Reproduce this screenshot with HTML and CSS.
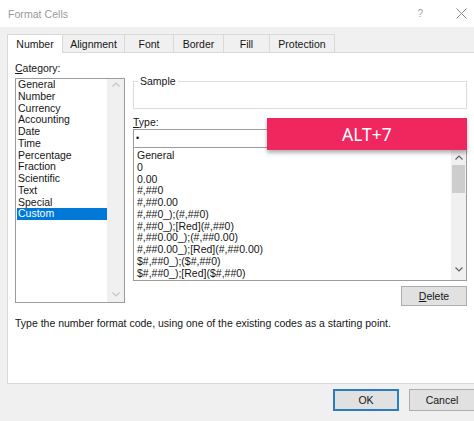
FILE: index.html
```html
<!DOCTYPE html>
<html lang="en">
<head>
<meta charset="utf-8">
<title>Format Cells</title>
<link rel="stylesheet" href="styles.css">
</head>
<body>
<div class="dialog">
  <div class="titlebar">
    <span class="title">Format Cells</span>
    <span class="help">?</span>
    <svg class="close" width="11" height="11" viewBox="0 0 11 11"><path d="M0.5 0.5 L10.5 10.5 M10.5 0.5 L0.5 10.5" stroke="#8a8a8a" stroke-width="1" fill="none"/></svg>
  </div>

  <div class="tabs">
    <div class="tab tab-number active">Number</div>
    <div class="tab tab-alignment">Alignment</div>
    <div class="tab tab-font">Font</div>
    <div class="tab tab-border">Border</div>
    <div class="tab tab-fill">Fill</div>
    <div class="tab tab-protection">Protection</div>
  </div>

  <div class="panel">
    <div class="columns">
      <div class="left">
        <div class="label"><span class="acc">C</span>ategory:</div>
        <div class="listbox category">
          <ul class="items">
            <li>General</li>
            <li>Number</li>
            <li>Currency</li>
            <li>Accounting</li>
            <li>Date</li>
            <li>Time</li>
            <li>Percentage</li>
            <li>Fraction</li>
            <li>Scientific</li>
            <li>Text</li>
            <li>Special</li>
            <li class="selected">Custom</li>
          </ul>
          <div class="scrollbar disabled">
            <svg width="8" height="5" viewBox="0 0 8 5"><path d="M0.5 4.5 L4 1 L7.5 4.5" stroke="#c4c4c4" stroke-width="1.2" fill="none"/></svg>
            <svg width="8" height="5" viewBox="0 0 8 5"><path d="M0.5 0.5 L4 4 L7.5 0.5" stroke="#c4c4c4" stroke-width="1.2" fill="none"/></svg>
          </div>
        </div>
      </div>

      <div class="right">
        <fieldset class="sample">
          <legend>Sample</legend>
          <div class="sample-body"></div>
        </fieldset>
        <div class="label type-label"><span class="acc">T</span>ype:</div>
        <div class="type-input">•</div>
        <div class="listbox formats">
          <ul class="items">
            <li>General</li>
            <li>0</li>
            <li>0.00</li>
            <li>#,##0</li>
            <li>#,##0.00</li>
            <li>#,##0_);(#,##0)</li>
            <li>#,##0_);[Red](#,##0)</li>
            <li>#,##0.00_);(#,##0.00)</li>
            <li>#,##0.00_);[Red](#,##0.00)</li>
            <li>$#,##0_);($#,##0)</li>
            <li>$#,##0_);[Red]($#,##0)</li>
          </ul>
          <div class="scrollbar active">
            <svg width="8" height="5" viewBox="0 0 8 5"><path d="M0.5 4.5 L4 1 L7.5 4.5" stroke="#606060" stroke-width="1.2" fill="none"/></svg>
            <div class="thumb"></div>
            <div class="track-fill"></div>
            <svg width="8" height="5" viewBox="0 0 8 5"><path d="M0.5 0.5 L4 4 L7.5 0.5" stroke="#606060" stroke-width="1.2" fill="none"/></svg>
          </div>
        </div>
        <div class="delete-row">
          <button class="btn delete"><span class="acc">D</span>elete</button>
        </div>
      </div>
    </div>
    <p class="hint">Type the number format code, using one of the existing codes as a starting point.</p>
  </div>

  <div class="footer">
    <button class="btn ok">OK</button>
    <button class="btn cancel">Cancel</button>
  </div>
</div>

<div class="shortcut">ALT+7</div>
</body>
</html>
```

FILE: styles.css
```css
* {
  box-sizing: border-box;
}

html, body {
  margin: 0;
  padding: 0;
}

body {
  width: 474px;
  height: 421px;
  overflow: hidden;
  background: #f0f0f0;
  font-family: "Liberation Sans", Arial, sans-serif;
  font-size: 10.5px;
  color: #151515;
  position: relative;
}

.dialog {
  width: 474px;
  height: 421px;
  display: flex;
  flex-direction: column;
}

/* Title bar */
.titlebar {
  height: 27px;
  background: #ffffff;
  display: flex;
  align-items: center;
  padding: 0 7px 0 8px;
  flex-shrink: 0;
}

.title {
  color: #9a9a9a;
  font-size: 10.6px;
}

.help {
  margin-left: auto;
  color: #a0a0a0;
  font-size: 10px;
  margin-right: 33px;
}

.close {
  display: block;
}

/* Tabs */
.tabs {
  display: flex;
  margin-top: 7px;
  padding-left: 7px;
  height: 18px;
  flex-shrink: 0;
}

.tab {
  height: 18px;
  line-height: 18px;
  text-align: center;
  border: 1px solid #d9d9d9;
  border-bottom: none;
  border-right: none;
  background: #f0f0f0;
  color: #151515;
}

.tab-protection {
  border-right: 1px solid #d9d9d9;
}

.tab.active {
  background: #ffffff;
  height: 19px;
  margin-bottom: -1px;
  position: relative;
  z-index: 1;
}

.tab-number { width: 55px; }
.tab-alignment { width: 62px; }
.tab-font { width: 49px; }
.tab-border { width: 50px; }
.tab-fill { width: 46px; }
.tab-protection { width: 66px; }

/* Panel */
.panel {
  margin-left: 7px;
  height: 332px;
  background: #ffffff;
  border: 1px solid #d9d9d9;
  border-right: none;
  flex-shrink: 0;
}

.columns {
  display: flex;
  gap: 8px;
  padding: 8px 7px 0 7px;
}

.left {
  width: 110px;
  flex-shrink: 0;
}

.right {
  flex: 1;
  display: flex;
  flex-direction: column;
}

.label {
  line-height: 14px;
  height: 14px;
}

.acc {
  text-decoration: underline;
  text-underline-offset: 1px;
  text-decoration-thickness: 1px;
}

/* List boxes */
.listbox {
  display: flex;
  border: 1px solid #9c9c9c;
  background: #ffffff;
}

.listbox.category {
  margin-top: 3px;
  height: 225px;
}

.items {
  list-style: none;
  margin: 0;
  padding: 0 0 0 1px;
  flex: 1;
  line-height: 11.75px;
  white-space: nowrap;
}

.items li {
  height: 11.75px;
  padding-left: 1px;
}

.items li.selected {
  background: #0078d7;
  color: #ffffff;
  height: 12px;
}

.scrollbar {
  background: #f0f0f0;
  display: flex;
  flex-direction: column;
  align-items: center;
}

.scrollbar.disabled {
  width: 17px;
  justify-content: space-between;
  padding: 3px 0 5px;
}

.scrollbar svg {
  display: block;
  flex-shrink: 0;
}

.formats {
  margin-top: -1px;
  height: 134px;
}

.formats .items {
  padding: 2px 0 0 3px;
}

.formats .items li {
  padding-left: 0;
}

.scrollbar.active {
  width: 15px;
  padding: 7px 0 8px;
}

.thumb {
  margin-top: 5px;
  width: 13px;
  height: 28px;
  background: #cdcdcd;
  flex-shrink: 0;
}

.track-fill {
  flex: 1;
}

/* Sample fieldset */
.sample {
  margin: 13px 0 0 0;
  padding: 0;
  border: 1px solid #dcdcdc;
}

.sample legend {
  padding: 0 2px;
  margin-left: 4px;
  line-height: 14px;
  height: 14px;
}

.sample-body {
  height: 20px;
}

.type-label {
  margin-top: 6px;
}

.type-input {
  height: 19px;
  border: 1px solid #9c9c9c;
  padding-left: 2px;
  line-height: 16px;
  font-size: 9px;
}

/* Buttons */
.delete-row {
  display: flex;
  justify-content: flex-end;
  margin-top: 5px;
}

.btn {
  font-family: inherit;
  font-size: 10.5px;
  color: #151515;
  background: #e1e1e1;
  border: 1px solid #adadad;
  width: 66px;
  height: 20px;
  padding: 0;
  margin: 0;
  line-height: 16px;
}

.hint {
  margin: 10px 0 0 0;
  padding-left: 7px;
  line-height: 14px;
}

.footer {
  display: flex;
  justify-content: flex-end;
  gap: 10px;
  padding-top: 5px;
  margin-right: -1px;
}

.footer .btn {
  height: 22px;
  flex-shrink: 0;
}

.btn.ok {
  border: 2px solid #2a7dc4;
}

/* ALT+7 overlay */
.shortcut {
  position: absolute;
  left: 267px;
  top: 118px;
  width: 200px;
  height: 32px;
  background: #f0275f;
  color: #ffffff;
  font-family: "Noto Sans", "Open Sans", sans-serif;
  font-size: 17.5px;
  display: flex;
  align-items: center;
  justify-content: center;
  box-shadow: 0 3px 4px rgba(0, 0, 0, 0.3);
  z-index: 5;
}
```
